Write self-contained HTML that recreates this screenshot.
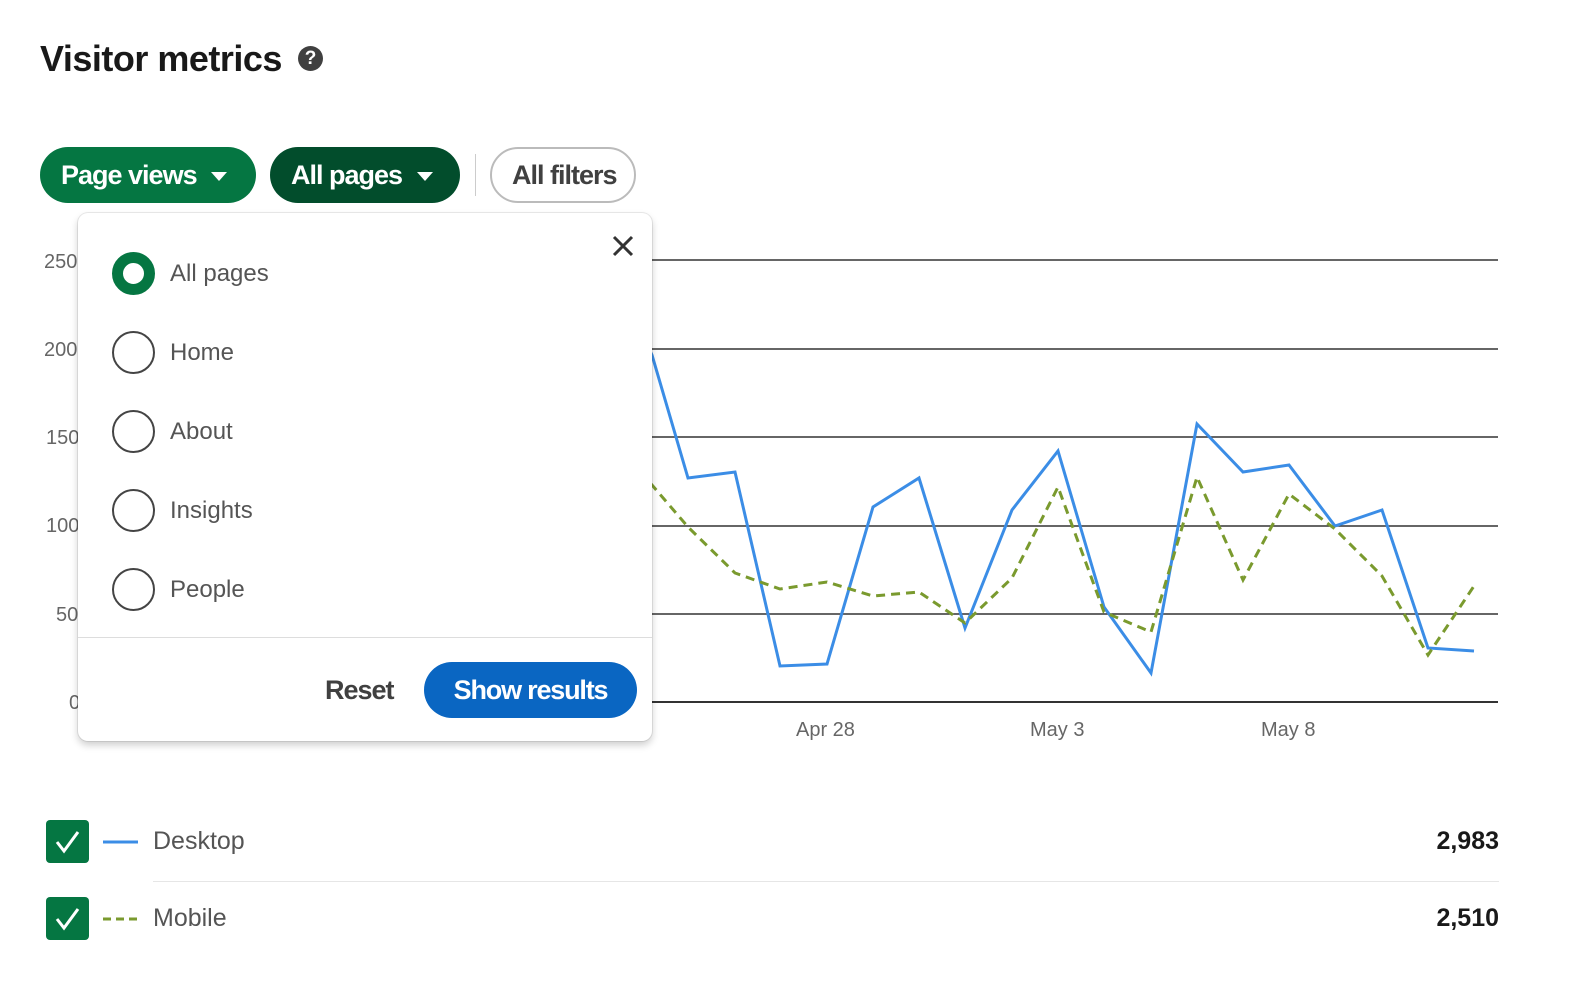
<!DOCTYPE html>
<html><head><style>
body{margin:0;width:1574px;height:982px;background:#fff;font-family:"Liberation Sans",sans-serif;position:relative;overflow:hidden}
.a{position:absolute}
.pill{position:absolute;height:56px;border-radius:28px;font-weight:bold;font-size:27px;letter-spacing:-1px;line-height:56px;box-sizing:border-box}
.r{position:absolute;left:112px;width:43px;height:43px;border:2px solid #444;border-radius:50%;box-sizing:border-box}
.lbl{position:absolute;left:170px;font-size:24px;color:#555}
.yl{position:absolute;font-size:20px;color:#666}
.cb{position:absolute;left:46px;width:43px;height:43px;background:#057642;border-radius:4px}
</style></head><body>
<div class="a" style="left:40px;top:38px;font-size:36px;font-weight:bold;color:#191919;letter-spacing:-0.5px">Visitor metrics</div>
<div class="a" style="left:298px;top:46px;width:25px;height:25px;border-radius:50%;background:#404040;color:#fff;font-size:19px;font-weight:bold;text-align:center;line-height:25px">?</div>
<div class="pill" style="left:40px;top:147px;width:216px;background:#057642;color:#fff;padding-left:21px">Page views <span style="display:inline-block;border:8px solid transparent;border-top:9px solid #fff;border-bottom:0;vertical-align:middle;margin-left:8px"></span></div>
<div class="pill" style="left:270px;top:147px;width:190px;background:#024d2c;color:#fff;padding-left:21px">All pages <span style="display:inline-block;border:8px solid transparent;border-top:9px solid #fff;border-bottom:0;vertical-align:middle;margin-left:8px"></span></div>
<div class="a" style="left:475px;top:154px;width:1px;height:42px;background:#ccc"></div>
<div class="pill" style="left:490px;top:147px;width:146px;border:2px solid #bbb;color:#404040;padding-left:20px;line-height:52px">All filters</div>
<div class="yl" style="left:44px;top:251px">250</div><div class="yl" style="left:44px;top:339px">200</div><div class="yl" style="left:46px;top:427px">150</div><div class="yl" style="left:46px;top:515px">100</div><div class="yl" style="left:56px;top:604px">50</div><div class="yl" style="left:69px;top:692px">0</div>
<svg class="a" style="left:0;top:0" width="1574" height="982">
<g stroke="#333" stroke-width="1.5"><line x1="90" y1="260" x2="1498" y2="260"/><line x1="90" y1="349" x2="1498" y2="349"/><line x1="90" y1="437" x2="1498" y2="437"/><line x1="90" y1="526" x2="1498" y2="526"/><line x1="90" y1="614" x2="1498" y2="614"/><line x1="90" y1="702" x2="1498" y2="702" stroke-width="2"/></g>
<polyline fill="none" stroke="#3b8de6" stroke-width="3" points="600,250 652,355 688,478 735,472 780,666 827,664 873,507 919,478 965,628 1012,510 1058,451 1104,607 1151,673 1197,424 1243,472 1289,465 1335,526 1382,510 1428,648 1474,651"/>
<polyline fill="none" stroke="#7a9a2e" stroke-width="3" stroke-dasharray="9,6" points="620,450 652,485 688,527 735,573 780,589 827,582 873,596 919,592 965,623 1012,578 1058,487 1104,612 1151,632 1197,477 1243,580 1289,494 1335,529 1382,576 1428,655 1474,586"/>
<line x1="103" y1="842" x2="138" y2="842" stroke="#3b8de6" stroke-width="3"/>
<line x1="103" y1="919" x2="138" y2="919" stroke="#7a9a2e" stroke-width="3" stroke-dasharray="8,5"/>
</svg>
<div class="yl" style="left:796px;top:719px">Apr 28</div><div class="yl" style="left:1030px;top:719px">May 3</div><div class="yl" style="left:1261px;top:719px">May 8</div>
<div class="a" style="left:78px;top:213px;width:574px;height:528px;background:#fff;border-radius:10px;box-shadow:0 0 0 1px rgba(0,0,0,.08),0 4px 8px rgba(0,0,0,.2)">
<svg class="a" style="left:534px;top:22px" width="22" height="22"><path d="M2 2L20 20M20 2L2 20" stroke="#333" stroke-width="3"/></svg>
<div class="a" style="left:0;top:424px;width:574px;height:1px;background:#ddd"></div>
<div class="a" style="left:247px;top:462px;font-size:27px;font-weight:bold;color:#404040;letter-spacing:-1px">Reset</div>
<div class="a" style="left:346px;top:449px;width:213px;height:56px;border-radius:28px;background:#0a66c2;color:#fff;font-size:27px;font-weight:bold;letter-spacing:-1.2px;line-height:56px;text-align:center">Show results</div>
</div>
<div class="r" style="top:252px;border:11px solid #057642"></div><div class="lbl" style="top:260px">All pages</div>
<div class="r" style="top:331px"></div><div class="lbl" style="top:339px">Home</div>
<div class="r" style="top:410px"></div><div class="lbl" style="top:418px">About</div>
<div class="r" style="top:489px"></div><div class="lbl" style="top:497px">Insights</div>
<div class="r" style="top:568px"></div><div class="lbl" style="top:576px">People</div>
<div class="cb" style="top:820px"><svg width="43" height="43"><path d="M11 22L18 31L32 12" fill="none" stroke="#fff" stroke-width="3"/></svg></div>
<div class="cb" style="top:897px"><svg width="43" height="43"><path d="M11 22L18 31L32 12" fill="none" stroke="#fff" stroke-width="3"/></svg></div>
<div class="a" style="left:153px;top:827px;font-size:25px;color:#555">Desktop</div>
<div class="a" style="left:153px;top:904px;font-size:25px;color:#555">Mobile</div>
<div class="a" style="left:153px;top:881px;width:1346px;height:1px;background:#e6e6e6"></div>
<div class="a" style="right:75px;top:827px;font-size:25px;font-weight:bold;color:#191919">2,983</div>
<div class="a" style="right:75px;top:904px;font-size:25px;font-weight:bold;color:#191919">2,510</div>
</body></html>
